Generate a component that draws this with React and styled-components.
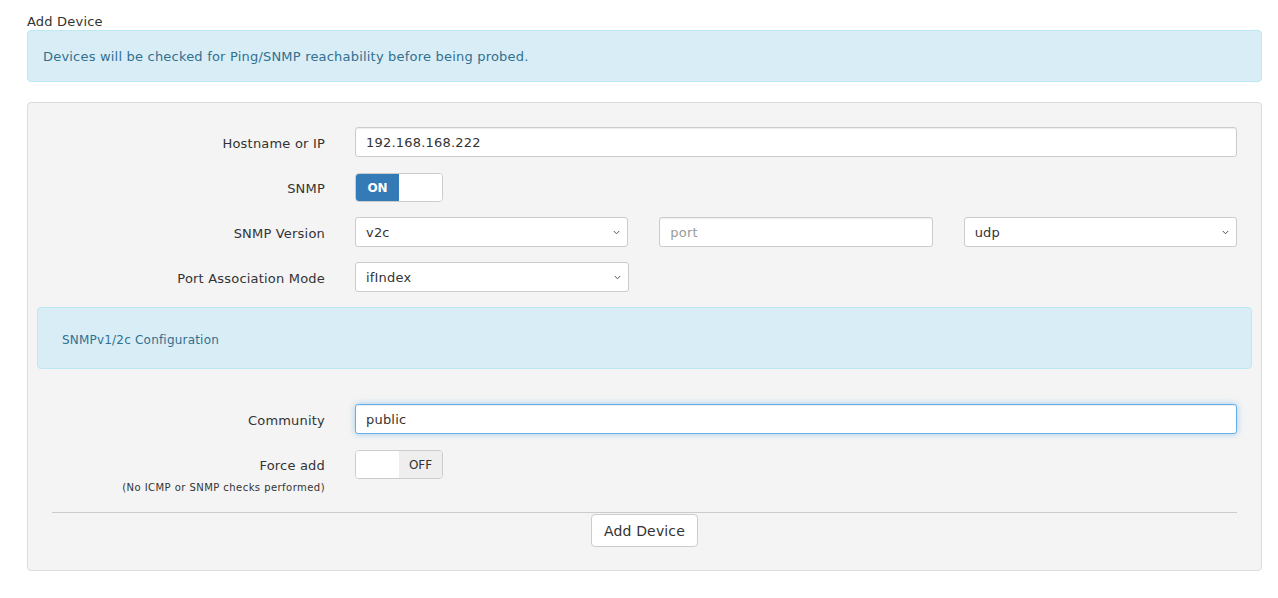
import styled, { createGlobalStyle } from "styled-components";

const GlobalStyle = createGlobalStyle`
  html, body { margin: 0; padding: 0; background: #fff; }
  body {
    font-family: "DejaVu Sans", "Liberation Sans", sans-serif;
    font-size: 13px;
    letter-spacing: 0.2px;
    color: #333;
  }
  * { box-sizing: border-box; }
`;

const Page = styled.div`
  padding: 12px 16px 26px 27px;
`;

const Title = styled.div`
  font-size: 13px;
  line-height: 17px;
  padding-top: 1px;
  color: #333;
`;

const Alert = styled.div`
  background: #d9edf7;
  border: 1px solid #bce8f1;
  border-radius: 4px;
  color: #31708f;
  font-size: ${(p) => (p.small ? "12px" : "13px")};
  padding: ${(p) => (p.small ? "3px 24px 0" : "2px 15px 0")};
  line-height: 18px;
  margin: ${(p) => p.margin || "0"};
  height: ${(p) => p.h || "auto"};
  display: flex;
  align-items: center;
`;

const Panel = styled.div`
  margin-top: 20px;
  background: #f4f4f4;
  border: 1px solid #dcdcdc;
  border-radius: 4px;
  padding: 24px 0 23px 0;
`;

const FormGroup = styled.div`
  display: grid;
  grid-template-columns: 297px 1fr;
  column-gap: 30px;
  padding-right: 24px;
  margin-bottom: ${(p) => p.mb || "15px"};
  align-items: start;
`;

const Label = styled.div`
  text-align: right;
  height: 30px;
  padding-top: 4px;
  line-height: 26px;
  font-size: 13px;
  color: #333;
`;

const Hint = styled.div`
  text-align: right;
  font-size: 10px;
  line-height: 14px;
  padding-top: 2px;
  letter-spacing: 0.45px;
  color: #333;
`;

const Input = styled.input`
  width: 100%;
  height: 30px;
  border: 1px solid ${(p) => (p.focused ? "#66afe9" : "#ccc")};
  box-shadow: ${(p) =>
    p.focused
      ? "inset 0 1px 1px rgba(0,0,0,.075), 0 0 6px rgba(102,175,233,.6)"
      : "inset 0 1px 1px rgba(0,0,0,.075)"};
  border-radius: 3px;
  background: #fff;
  padding: 0 10px;
  font-family: inherit;
  font-size: 13px;
  letter-spacing: 0.2px;
  color: #333;
  outline: none;
  &::placeholder { color: #999; }
`;

const SelectBox = styled.div`
  height: 30px;
  border: 1px solid #ccc;
  border-radius: 3px;
  background: #fff;
  padding: 0 7px 0 10px;
  display: flex;
  align-items: center;
  justify-content: space-between;
  font-size: 13px;
  color: #333;
  width: ${(p) => p.width || "100%"};
`;

const Chevron = () => (
  <svg width="7" height="5" viewBox="0 0 7 5">
    <path d="M0.8 1 L3.5 3.8 L6.2 1" fill="none" stroke="#555" strokeWidth="1" />
  </svg>
);

const Select = ({ value, width }) => (
  <SelectBox width={width}>
    <span>{value}</span>
    <Chevron />
  </SelectBox>
);

const Triple = styled.div`
  display: grid;
  grid-template-columns: 1fr 1fr 1fr;
  column-gap: 31px;
`;

const Toggle = styled.div`
  display: flex;
  width: 88px;
  height: 29px;
  border: 1px solid #ccc;
  border-radius: 4px;
  overflow: hidden;
  background: #fff;
  margin-top: 1px;
`;

const ToggleHalf = styled.div`
  width: 50%;
  display: flex;
  align-items: center;
  justify-content: center;
  font-size: 12px;
  letter-spacing: 0;
  font-weight: ${(p) => (p.on ? "bold" : "normal")};
  color: ${(p) => (p.on ? "#fff" : "#333")};
  background: ${(p) => (p.on ? "#337ab7" : p.off ? "#eee" : "#fff")};
`;

const Divider = styled.hr`
  border: 0;
  border-top: 1px solid #ccc;
  margin: 0 24px 1px 24px;
`;

const Actions = styled.div`
  display: flex;
  justify-content: center;
`;

const Button = styled.button`
  height: 33px;
  padding: 1px 12px 0;
  border: 1px solid #ccc;
  border-radius: 4px;
  background: #fff;
  font-family: inherit;
  font-size: 14px;
  letter-spacing: 0.15px;
  color: #333;
`;

const Row = ({ label, children, mb }) => (
  <FormGroup mb={mb}>
    <Label>{label}</Label>
    {children}
  </FormGroup>
);

export default function App() {
  return (
    <>
      <GlobalStyle />
      <Page>
        <Title>Add Device</Title>
        <Alert h="52px">
          Devices will be checked for Ping/SNMP reachability before being probed.
        </Alert>
        <Panel>
          <Row label="Hostname or IP">
            <Input defaultValue="192.168.168.222" />
          </Row>
          <Row label="SNMP">
            <Toggle>
              <ToggleHalf on>ON</ToggleHalf>
              <ToggleHalf />
            </Toggle>
          </Row>
          <Row label="SNMP Version">
            <Triple>
              <Select value="v2c" />
              <Input placeholder="port" />
              <Select value="udp" />
            </Triple>
          </Row>
          <Row label="Port Association Mode">
            <Select value="ifIndex" width="274px" />
          </Row>
          <Alert small h="62px" margin="0 9px 35px 9px">
            SNMPv1/2c Configuration
          </Alert>
          <Row label="Community">
            <Input focused defaultValue="public" />
          </Row>
          <FormGroup mb="17px">
            <div>
              <Label>Force add</Label>
              <Hint>(No ICMP or SNMP checks performed)</Hint>
            </div>
            <Toggle>
              <ToggleHalf />
              <ToggleHalf off>OFF</ToggleHalf>
            </Toggle>
          </FormGroup>
          <Divider />
          <Actions>
            <Button>Add Device</Button>
          </Actions>
        </Panel>
      </Page>
    </>
  );
}
